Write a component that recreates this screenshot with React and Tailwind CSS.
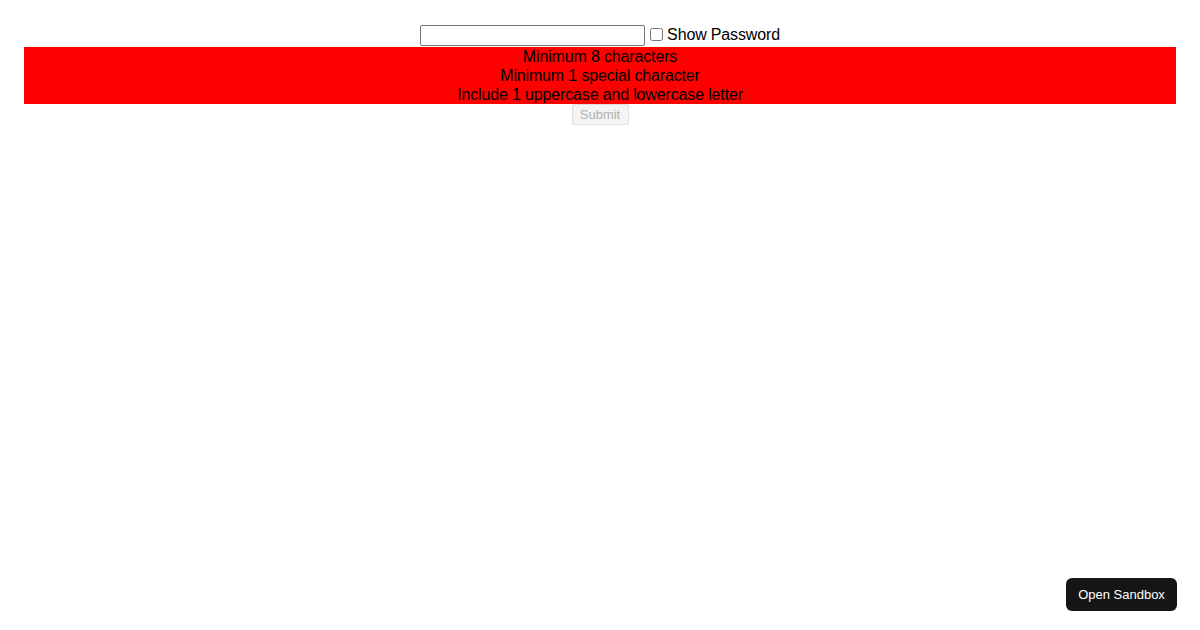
import React, { useState } from 'react';

const rules = [
  'Minimum 8 characters',
  'Minimum 1 special character',
  'Include 1 uppercase and lowercase letter',
];

const App = () => {
  const [password, setPassword] = useState('');
  const [show, setShow] = useState(false);

  return (
    <div className="min-h-[630px] bg-white px-6 pt-[25px] text-center text-black font-['Liberation_Sans',Arial,sans-serif] tracking-[-0.15px]">
      <div className="flex h-[22px] items-start justify-center">
        <input
          type={show ? 'text' : 'password'}
          value={password}
          onChange={(e) => setPassword(e.target.value)}
          className="h-[21px] w-[225px] rounded-[2px] border border-[#767676] bg-white px-[2px] text-[13px] outline-none"
        />
        <input
          type="checkbox"
          checked={show}
          onChange={() => setShow(!show)}
          className="ml-[5px] mr-[4px] mt-[3px] h-[13px] w-[13px]"
        />
        <span className="text-base leading-[18px] mt-[1px]">Show Password</span>
      </div>
      <div className="bg-[#ff0000] text-base leading-[19px]">
        {rules.map((rule) => (
          <div key={rule}>{rule}</div>
        ))}
      </div>
      <button
        disabled
        className="mx-auto block h-[21px] w-[57px] rounded-[2px] border border-[#e0e0e0] bg-[#f4f4f4] text-[13px] leading-[19px] tracking-normal text-[#b0b0b0] font-['Liberation_Sans',Arial,sans-serif]"
      >
        Submit
      </button>

      <button className="absolute bottom-[19px] right-[23px] h-[33px] w-[111px] rounded-md bg-[#151515] text-[13px] tracking-normal text-white font-['Liberation_Sans',Arial,sans-serif]">
        Open Sandbox
      </button>
    </div>
  );
};

export default App;
